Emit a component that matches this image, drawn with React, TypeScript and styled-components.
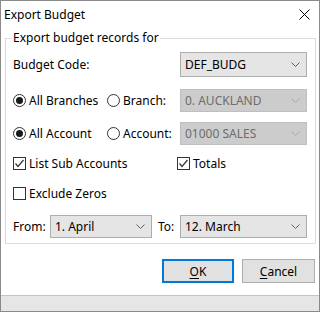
import React from 'react';
import styled, { createGlobalStyle } from 'styled-components';

const Global = createGlobalStyle`
  html, body { margin: 0; padding: 0; background: #fff; }
  body {
    font-family: "Noto Sans", "Open Sans", sans-serif;
    font-size: 12px;
    color: #000;
  }
  * { box-sizing: border-box; }
`;

const Window = styled.div`
  width: 320px;
  height: 312px;
  border: 1px solid #8a8a8a;
  background: #fff;
  display: flex;
  flex-direction: column;
`;

const TitleBar = styled.div`
  height: 29px;
  display: flex;
  align-items: center;
  justify-content: space-between;
  padding: 0 9px 2px 3px;
  font-size: 12px;
`;

const Body = styled.div`
  flex: 1;
  display: flex;
  flex-direction: column;
  padding: 0 3px 0 4px;
`;

const Group = styled.fieldset`
  margin: 0;
  padding: 6px 8px 5px 7px;
  border: 1px solid #dcdcdc;
  min-width: 0;
  display: flex;
  flex-direction: column;
`;

const Legend = styled.legend`
  padding: 0 1px;
  margin-left: -1px;
  line-height: 16px;
`;

const Row = styled.div<{ $h: number; $mt: number; $cols: string }>`
  display: grid;
  grid-template-columns: ${(p) => p.$cols};
  align-items: center;
  height: ${(p) => p.$h}px;
  margin-top: ${(p) => p.$mt}px;
`;

const Label = styled.span<{ $pl?: number }>`
  padding-left: ${(p) => p.$pl ?? 0}px;
  white-space: nowrap;
`;

const SelectBox = styled.div<{ $disabled?: boolean; $h: number }>`
  height: ${(p) => p.$h}px;
  border: 1px solid ${(p) => (p.$disabled ? '#bfbfbf' : '#adadad')};
  background: ${(p) => (p.$disabled ? '#cccccc' : '#e5e5e5')};
  color: ${(p) => (p.$disabled ? '#6d6d6d' : '#000')};
  display: flex;
  align-items: center;
  justify-content: space-between;
  padding: 0 6px 0 4px;
  white-space: nowrap;
`;

const Choice = styled.label`
  display: flex;
  align-items: center;
  gap: 3px;
  white-space: nowrap;
`;

const RadioCircle = styled.span<{ $on?: boolean }>`
  width: 13px;
  height: 13px;
  border-radius: 50%;
  border: 1px solid #333;
  background: #fff;
  display: flex;
  align-items: center;
  justify-content: center;
  flex: none;
  &::after {
    content: '';
    width: 7px;
    height: 7px;
    border-radius: 50%;
    background: ${(p) => (p.$on ? '#1a1a1a' : 'transparent')};
  }
`;

const CheckSquare = styled.span`
  width: 13px;
  height: 13px;
  border: 1px solid #333;
  background: #fff;
  display: flex;
  align-items: center;
  justify-content: center;
  flex: none;
`;

const ButtonRow = styled.div`
  display: flex;
  justify-content: flex-end;
  gap: 8px;
  margin-top: 15px;
  padding-right: 1px;
`;

const Button = styled.button<{ $default?: boolean; $w: number }>`
  width: ${(p) => p.$w}px;
  height: 24px;
  font: inherit;
  color: #000;
  background: #e1e1e1;
  border: ${(p) => (p.$default ? '2px solid #0078d7' : '1px solid #adadad')};
  padding: 0;
  display: flex;
  align-items: center;
  justify-content: center;
  u { text-decoration: underline; text-underline-offset: 2px; }
`;

const StatusBar = styled.div`
  margin: auto 0 0 0;
  height: 16px;
  background: #e6e6e6;
  border-top: 1px solid #c4c4c4;
`;

const Chevron = ({ disabled }: { disabled?: boolean }) => (
  <svg width="9" height="5" viewBox="0 0 9 5">
    <polyline points="0.5,0.5 4.5,4.5 8.5,0.5" fill="none" stroke={disabled ? '#a8a8a8' : '#606060'} strokeWidth="1" />
  </svg>
);

const Select = ({ value, disabled, h = 23 }: { value: string; disabled?: boolean; h?: number }) => (
  <SelectBox $disabled={disabled} $h={h}>
    <span>{value}</span>
    <Chevron disabled={disabled} />
  </SelectBox>
);

const Radio = ({ on, label }: { on?: boolean; label: string }) => (
  <Choice>
    <RadioCircle $on={on} />
    <span>{label}</span>
  </Choice>
);

const Check = ({ on, label }: { on?: boolean; label: string }) => (
  <Choice>
    <CheckSquare>
      {on && (
        <svg width="11" height="11" viewBox="0 0 11 11">
          <polyline points="1.5,5.5 4,8.5 9.5,2" fill="none" stroke="#333" strokeWidth="1.2" />
        </svg>
      )}
    </CheckSquare>
    <span>{label}</span>
  </Choice>
);

export default function App() {
  return (
    <>
      <Global />
      <Window>
        <TitleBar>
          <span>Export Budget</span>
          <svg width="11" height="11" viewBox="0 0 11 11">
            <line x1="0.5" y1="0.5" x2="10.5" y2="10.5" stroke="#000" strokeWidth="1" />
            <line x1="10.5" y1="0.5" x2="0.5" y2="10.5" stroke="#000" strokeWidth="1" />
          </svg>
        </TitleBar>
        <Body>
          <Group>
            <Legend>Export budget records for</Legend>
            <Row $h={25} $mt={0} $cols="1fr 127px">
              <Label>Budget Code:</Label>
              <Select value="DEF_BUDG" h={25} />
            </Row>
            <Row $h={23} $mt={12} $cols="94px 1fr 127px">
              <Radio on label="All Branches" />
              <Radio label="Branch:" />
              <Select value="0. AUCKLAND" disabled />
            </Row>
            <Row $h={23} $mt={10} $cols="94px 1fr 127px">
              <Radio on label="All Account" />
              <Radio label="Account:" />
              <Select value="01000 SALES" disabled />
            </Row>
            <Row $h={20} $mt={8} $cols="164px 1fr">
              <Check on label="List Sub Accounts" />
              <Check on label="Totals" />
            </Row>
            <Row $h={20} $mt={10} $cols="1fr">
              <Check label="Exclude Zeros" />
            </Row>
            <Row $h={23} $mt={12} $cols="37px 102px 1fr 127px">
              <Label>From:</Label>
              <Select value="1. April" />
              <Label $pl={6}>To:</Label>
              <Select value="12. March" />
            </Row>
          </Group>
          <ButtonRow>
            <Button $default $w={72}><span><u>O</u>K</span></Button>
            <Button $w={73}><span><u>C</u>ancel</span></Button>
          </ButtonRow>
        </Body>
        <StatusBar />
      </Window>
    </>
  );
}
